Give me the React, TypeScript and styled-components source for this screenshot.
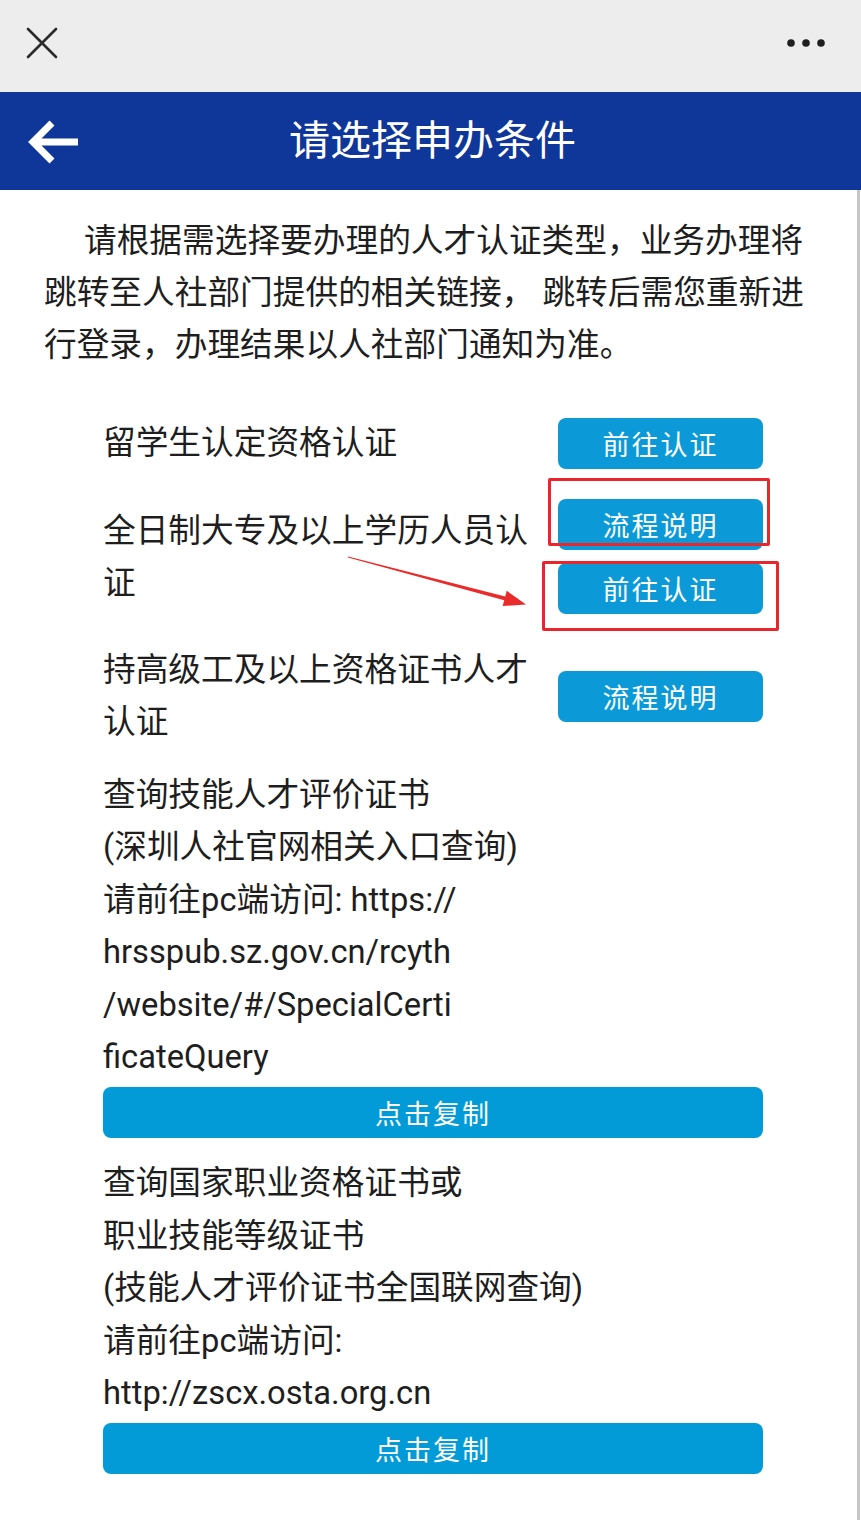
import styled, { createGlobalStyle } from 'styled-components';

const GlobalStyle = createGlobalStyle`
  html, body {
    margin: 0;
    padding: 0;
    overflow: hidden;
    background: #fff;
  }
  body {
    font-family: Roboto, "Noto Sans CJK SC", sans-serif;
    color: #1e1e1e;
  }
  * {
    box-sizing: border-box;
  }
`;

const rows = [
  { label: ['留学生认定资格认证'], buttons: ['前往认证'] },
  { label: ['全日制大专及以上学历人员认', '证'], buttons: ['流程说明', '前往认证'] },
  { label: ['持高级工及以上资格证书人才', '认证'], buttons: ['流程说明'] },
];

const queries = [
  {
    lines: [
      '查询技能人才评价证书',
      '(深圳人社官网相关入口查询)',
      '请前往pc端访问: https://',
      'hrsspub.sz.gov.cn/rcyth',
      '/website/#/SpecialCerti',
      'ficateQuery',
    ],
  },
  {
    lines: [
      '查询国家职业资格证书或',
      '职业技能等级证书',
      '(技能人才评价证书全国联网查询)',
      '请前往pc端访问:',
      'http://zscx.osta.org.cn',
    ],
  },
];

export default function App() {
  return (
    <PageSt>
      <GlobalStyle />
      <TopBarSt>
        <svg width="32" height="32" viewBox="0 0 32 32">
          <path d="M2 2 L30 30 M30 2 L2 30" stroke="#2b2b2b" strokeWidth="2.6" strokeLinecap="round" />
        </svg>
        <svg width="40" height="10" viewBox="0 0 40 10">
          <circle cx="4" cy="5" r="3.8" fill="#1f1f1f" />
          <circle cx="19" cy="5" r="3.8" fill="#1f1f1f" />
          <circle cx="34" cy="5" r="3.8" fill="#1f1f1f" />
        </svg>
      </TopBarSt>

      <HeaderSt>
        <BackSt>
          <svg width="52" height="46" viewBox="0 0 52 46">
            <path
              d="M24 4 L5 23 L24 42 M5 23 L50 23"
              stroke="#fff"
              strokeWidth="7"
              fill="none"
              strokeLinejoin="miter"
            />
          </svg>
        </BackSt>
        <TitleSt>请选择申办条件</TitleSt>
      </HeaderSt>

      <ContentSt>
        <IntroSt>
          请根据需选择要办理的人才认证类型，业务办理将
          <br />
          跳转至人社部门提供的相关链接， 跳转后需您重新进
          <br />
          行登录，办理结果以人社部门通知为准。
        </IntroSt>

        <ListSt>
          {rows.map((row, i) => (
            <RowSt key={i}>
              <LabelSt>
                {row.label.map((l, j) => (
                  <div key={j}>{l}</div>
                ))}
              </LabelSt>
              <ButtonColSt>
                {row.buttons.map((b, j) => (
                  <ActionButtonSt key={j}>{b}</ActionButtonSt>
                ))}
              </ButtonColSt>
            </RowSt>
          ))}

          {queries.map((q, i) => (
            <QueryBlockSt key={i} $first={i === 0}>
              <QueryTextSt>
                {q.lines.map((l, j) => (
                  <div key={j}>{l}</div>
                ))}
              </QueryTextSt>
              <CopyButtonSt>点击复制</CopyButtonSt>
            </QueryBlockSt>
          ))}
        </ListSt>
      </ContentSt>

      <RedBoxSt $x={548} $y={478} $w={222} $h={68} />
      <RedBoxSt $x={542} $y={561} $w={237} $h={70} />
      <ArrowSt width="195" height="70" viewBox="340 545 195 70">
        <polygon
          points="347.9,557.5 504.2,600.3 502.7,606.1 526,604.5 506.7,590.7 505.2,596.5 348.1,556.5"
          fill="#ea2b2b"
        />
      </ArrowSt>
    </PageSt>
  );
}

const PageSt = styled.div`
  position: relative;
  width: 861px;
  height: 1520px;
  display: flex;
  flex-direction: column;
  overflow: hidden;
  background: #fff;
`;

const TopBarSt = styled.div`
  height: 92px;
  flex-shrink: 0;
  background: #ededed;
  display: flex;
  align-items: center;
  justify-content: space-between;
  padding: 0 34px 6px 26px;
`;

const HeaderSt = styled.div`
  height: 98px;
  flex-shrink: 0;
  background: #0f3699;
  display: grid;
  grid-template-columns: 1fr auto 1fr;
  align-items: center;
`;

const BackSt = styled.div`
  display: flex;
  align-items: center;
  padding-left: 28px;
  padding-top: 2px;
`;

const TitleSt = styled.h1`
  margin: 0;
  color: #fff;
  font-size: 41px;
  font-weight: 400;
  line-height: 1;
  padding-left: 4px;
`;

const ContentSt = styled.div`
  flex: 1;
  padding: 25px 0 0 44px;
  border-right: 3px solid #c6c6c6;
  margin-right: 1px;
`;

const IntroSt = styled.p`
  margin: 0;
  font-size: 32.7px;
  line-height: 52px;
  text-indent: 40px;
  white-space: nowrap;
`;

const ListSt = styled.div`
  margin: 46px 0 0 59px;
  width: 660px;
  display: flex;
  flex-direction: column;
`;

const RowSt = styled.div`
  display: flex;
  align-items: center;
  justify-content: space-between;

  & + & {
    margin-top: 30px;
  }
`;

const LabelSt = styled.div`
  font-size: 32.7px;
  line-height: 52px;
  white-space: nowrap;
`;

const ButtonColSt = styled.div`
  width: 205px;
  display: flex;
  flex-direction: column;
  gap: 13px;
`;

const ActionButtonSt = styled.button`
  height: 51px;
  border: none;
  border-radius: 8px;
  background: #0b9ad7;
  color: #fff;
  font-family: "Noto Sans CJK SC", sans-serif;
  font-size: 27px;
  letter-spacing: 2px;
  padding: 0;
  display: flex;
  align-items: center;
  justify-content: center;
`;

const QueryBlockSt = styled.div<{ $first: boolean }>`
  margin-top: ${(p) => (p.$first ? '21px' : '19px')};
`;

const QueryTextSt = styled.div`
  font-size: 32.7px;
  line-height: 52.4px;
  white-space: nowrap;
`;

const CopyButtonSt = styled(ActionButtonSt)`
  width: 100%;
  margin-top: 4px;
  background: #039bd7;
`;

const RedBoxSt = styled.div<{ $x: number; $y: number; $w: number; $h: number }>`
  position: absolute;
  left: ${(p) => p.$x}px;
  top: ${(p) => p.$y}px;
  width: ${(p) => p.$w}px;
  height: ${(p) => p.$h}px;
  border: 3px solid #e8262b;
  border-radius: 2px;
  pointer-events: none;
`;

const ArrowSt = styled.svg`
  position: absolute;
  left: 340px;
  top: 545px;
  pointer-events: none;
`;
